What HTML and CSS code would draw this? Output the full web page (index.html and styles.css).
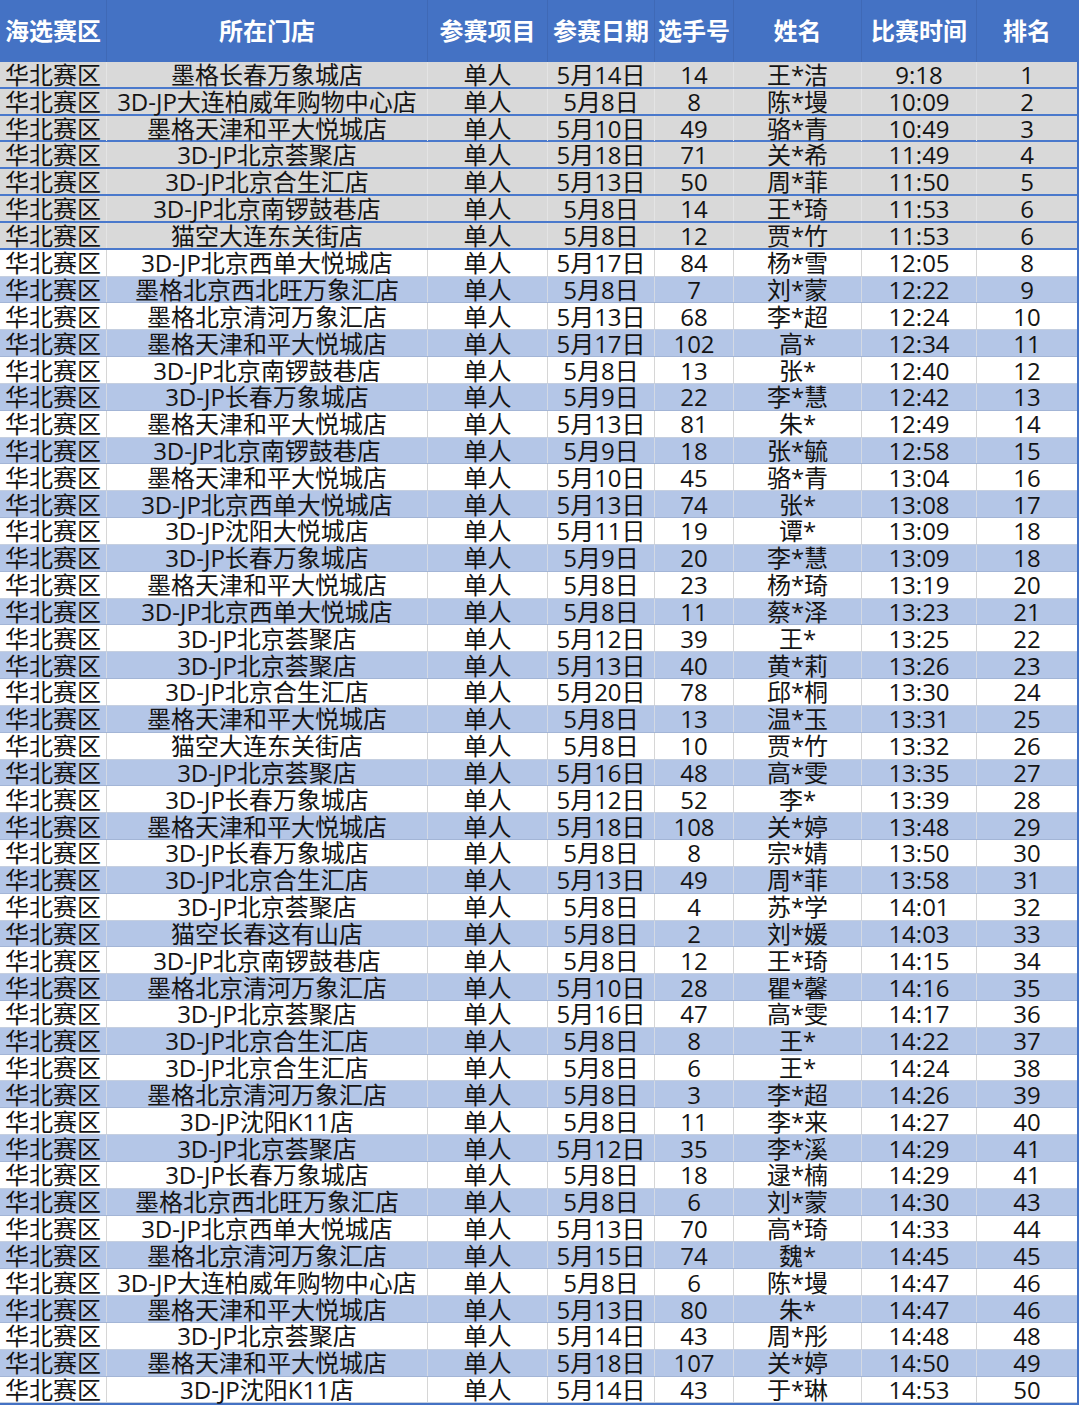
FILE: index.html
```html
<!DOCTYPE html>
<html lang="zh-CN">
<head>
<meta charset="utf-8">
<title>海选赛区排名</title>
<link rel="stylesheet" href="styles.css">
</head>
<body>
<div class="sheet">
  <div class="row head"><span>海选赛区</span><span>所在门店</span><span>参赛项目</span><span>参赛日期</span><span>选手号</span><span>姓名</span><span>比赛时间</span><span>排名</span></div>
  <div class="row grey"><span>华北赛区</span><span>墨格长春万象城店</span><span>单人</span><span>5月14日</span><span>14</span><span>王*洁</span><span>9:18</span><span>1</span></div>
  <div class="row grey"><span>华北赛区</span><span>3D-JP大连柏威年购物中心店</span><span>单人</span><span>5月8日</span><span>8</span><span>陈*墁</span><span>10:09</span><span>2</span></div>
  <div class="row grey"><span>华北赛区</span><span>墨格天津和平大悦城店</span><span>单人</span><span>5月10日</span><span>49</span><span>骆*青</span><span>10:49</span><span>3</span></div>
  <div class="row grey"><span>华北赛区</span><span>3D-JP北京荟聚店</span><span>单人</span><span>5月18日</span><span>71</span><span>关*希</span><span>11:49</span><span>4</span></div>
  <div class="row grey"><span>华北赛区</span><span>3D-JP北京合生汇店</span><span>单人</span><span>5月13日</span><span>50</span><span>周*菲</span><span>11:50</span><span>5</span></div>
  <div class="row grey"><span>华北赛区</span><span>3D-JP北京南锣鼓巷店</span><span>单人</span><span>5月8日</span><span>14</span><span>王*琦</span><span>11:53</span><span>6</span></div>
  <div class="row grey last"><span>华北赛区</span><span>猫空大连东关街店</span><span>单人</span><span>5月8日</span><span>12</span><span>贾*竹</span><span>11:53</span><span>6</span></div>
  <div class="row white"><span>华北赛区</span><span>3D-JP北京西单大悦城店</span><span>单人</span><span>5月17日</span><span>84</span><span>杨*雪</span><span>12:05</span><span>8</span></div>
  <div class="row blue"><span>华北赛区</span><span>墨格北京西北旺万象汇店</span><span>单人</span><span>5月8日</span><span>7</span><span>刘*蒙</span><span>12:22</span><span>9</span></div>
  <div class="row white"><span>华北赛区</span><span>墨格北京清河万象汇店</span><span>单人</span><span>5月13日</span><span>68</span><span>李*超</span><span>12:24</span><span>10</span></div>
  <div class="row blue"><span>华北赛区</span><span>墨格天津和平大悦城店</span><span>单人</span><span>5月17日</span><span>102</span><span>高*</span><span>12:34</span><span>11</span></div>
  <div class="row white"><span>华北赛区</span><span>3D-JP北京南锣鼓巷店</span><span>单人</span><span>5月8日</span><span>13</span><span>张*</span><span>12:40</span><span>12</span></div>
  <div class="row blue"><span>华北赛区</span><span>3D-JP长春万象城店</span><span>单人</span><span>5月9日</span><span>22</span><span>李*慧</span><span>12:42</span><span>13</span></div>
  <div class="row white"><span>华北赛区</span><span>墨格天津和平大悦城店</span><span>单人</span><span>5月13日</span><span>81</span><span>朱*</span><span>12:49</span><span>14</span></div>
  <div class="row blue"><span>华北赛区</span><span>3D-JP北京南锣鼓巷店</span><span>单人</span><span>5月9日</span><span>18</span><span>张*毓</span><span>12:58</span><span>15</span></div>
  <div class="row white"><span>华北赛区</span><span>墨格天津和平大悦城店</span><span>单人</span><span>5月10日</span><span>45</span><span>骆*青</span><span>13:04</span><span>16</span></div>
  <div class="row blue"><span>华北赛区</span><span>3D-JP北京西单大悦城店</span><span>单人</span><span>5月13日</span><span>74</span><span>张*</span><span>13:08</span><span>17</span></div>
  <div class="row white"><span>华北赛区</span><span>3D-JP沈阳大悦城店</span><span>单人</span><span>5月11日</span><span>19</span><span>谭*</span><span>13:09</span><span>18</span></div>
  <div class="row blue"><span>华北赛区</span><span>3D-JP长春万象城店</span><span>单人</span><span>5月9日</span><span>20</span><span>李*慧</span><span>13:09</span><span>18</span></div>
  <div class="row white"><span>华北赛区</span><span>墨格天津和平大悦城店</span><span>单人</span><span>5月8日</span><span>23</span><span>杨*琦</span><span>13:19</span><span>20</span></div>
  <div class="row blue"><span>华北赛区</span><span>3D-JP北京西单大悦城店</span><span>单人</span><span>5月8日</span><span>11</span><span>蔡*泽</span><span>13:23</span><span>21</span></div>
  <div class="row white"><span>华北赛区</span><span>3D-JP北京荟聚店</span><span>单人</span><span>5月12日</span><span>39</span><span>王*</span><span>13:25</span><span>22</span></div>
  <div class="row blue"><span>华北赛区</span><span>3D-JP北京荟聚店</span><span>单人</span><span>5月13日</span><span>40</span><span>黄*莉</span><span>13:26</span><span>23</span></div>
  <div class="row white"><span>华北赛区</span><span>3D-JP北京合生汇店</span><span>单人</span><span>5月20日</span><span>78</span><span>邱*桐</span><span>13:30</span><span>24</span></div>
  <div class="row blue"><span>华北赛区</span><span>墨格天津和平大悦城店</span><span>单人</span><span>5月8日</span><span>13</span><span>温*玉</span><span>13:31</span><span>25</span></div>
  <div class="row white"><span>华北赛区</span><span>猫空大连东关街店</span><span>单人</span><span>5月8日</span><span>10</span><span>贾*竹</span><span>13:32</span><span>26</span></div>
  <div class="row blue"><span>华北赛区</span><span>3D-JP北京荟聚店</span><span>单人</span><span>5月16日</span><span>48</span><span>高*雯</span><span>13:35</span><span>27</span></div>
  <div class="row white"><span>华北赛区</span><span>3D-JP长春万象城店</span><span>单人</span><span>5月12日</span><span>52</span><span>李*</span><span>13:39</span><span>28</span></div>
  <div class="row blue"><span>华北赛区</span><span>墨格天津和平大悦城店</span><span>单人</span><span>5月18日</span><span>108</span><span>关*婷</span><span>13:48</span><span>29</span></div>
  <div class="row white"><span>华北赛区</span><span>3D-JP长春万象城店</span><span>单人</span><span>5月8日</span><span>8</span><span>宗*婧</span><span>13:50</span><span>30</span></div>
  <div class="row blue"><span>华北赛区</span><span>3D-JP北京合生汇店</span><span>单人</span><span>5月13日</span><span>49</span><span>周*菲</span><span>13:58</span><span>31</span></div>
  <div class="row white"><span>华北赛区</span><span>3D-JP北京荟聚店</span><span>单人</span><span>5月8日</span><span>4</span><span>苏*学</span><span>14:01</span><span>32</span></div>
  <div class="row blue"><span>华北赛区</span><span>猫空长春这有山店</span><span>单人</span><span>5月8日</span><span>2</span><span>刘*媛</span><span>14:03</span><span>33</span></div>
  <div class="row white"><span>华北赛区</span><span>3D-JP北京南锣鼓巷店</span><span>单人</span><span>5月8日</span><span>12</span><span>王*琦</span><span>14:15</span><span>34</span></div>
  <div class="row blue"><span>华北赛区</span><span>墨格北京清河万象汇店</span><span>单人</span><span>5月10日</span><span>28</span><span>瞿*馨</span><span>14:16</span><span>35</span></div>
  <div class="row white"><span>华北赛区</span><span>3D-JP北京荟聚店</span><span>单人</span><span>5月16日</span><span>47</span><span>高*雯</span><span>14:17</span><span>36</span></div>
  <div class="row blue"><span>华北赛区</span><span>3D-JP北京合生汇店</span><span>单人</span><span>5月8日</span><span>8</span><span>王*</span><span>14:22</span><span>37</span></div>
  <div class="row white"><span>华北赛区</span><span>3D-JP北京合生汇店</span><span>单人</span><span>5月8日</span><span>6</span><span>王*</span><span>14:24</span><span>38</span></div>
  <div class="row blue"><span>华北赛区</span><span>墨格北京清河万象汇店</span><span>单人</span><span>5月8日</span><span>3</span><span>李*超</span><span>14:26</span><span>39</span></div>
  <div class="row white"><span>华北赛区</span><span>3D-JP沈阳K11店</span><span>单人</span><span>5月8日</span><span>11</span><span>李*来</span><span>14:27</span><span>40</span></div>
  <div class="row blue"><span>华北赛区</span><span>3D-JP北京荟聚店</span><span>单人</span><span>5月12日</span><span>35</span><span>李*溪</span><span>14:29</span><span>41</span></div>
  <div class="row white"><span>华北赛区</span><span>3D-JP长春万象城店</span><span>单人</span><span>5月8日</span><span>18</span><span>逯*楠</span><span>14:29</span><span>41</span></div>
  <div class="row blue"><span>华北赛区</span><span>墨格北京西北旺万象汇店</span><span>单人</span><span>5月8日</span><span>6</span><span>刘*蒙</span><span>14:30</span><span>43</span></div>
  <div class="row white"><span>华北赛区</span><span>3D-JP北京西单大悦城店</span><span>单人</span><span>5月13日</span><span>70</span><span>高*琦</span><span>14:33</span><span>44</span></div>
  <div class="row blue"><span>华北赛区</span><span>墨格北京清河万象汇店</span><span>单人</span><span>5月15日</span><span>74</span><span>魏*</span><span>14:45</span><span>45</span></div>
  <div class="row white"><span>华北赛区</span><span>3D-JP大连柏威年购物中心店</span><span>单人</span><span>5月8日</span><span>6</span><span>陈*墁</span><span>14:47</span><span>46</span></div>
  <div class="row blue"><span>华北赛区</span><span>墨格天津和平大悦城店</span><span>单人</span><span>5月13日</span><span>80</span><span>朱*</span><span>14:47</span><span>46</span></div>
  <div class="row white"><span>华北赛区</span><span>3D-JP北京荟聚店</span><span>单人</span><span>5月14日</span><span>43</span><span>周*彤</span><span>14:48</span><span>48</span></div>
  <div class="row blue"><span>华北赛区</span><span>墨格天津和平大悦城店</span><span>单人</span><span>5月18日</span><span>107</span><span>关*婷</span><span>14:50</span><span>49</span></div>
  <div class="row white"><span>华北赛区</span><span>3D-JP沈阳K11店</span><span>单人</span><span>5月14日</span><span>43</span><span>于*琳</span><span>14:53</span><span>50</span></div>
</div>
</body>
</html>
```
FILE: styles.css
```css
html, body {
  margin: 0;
  padding: 0;
  background: #ffffff;
}

body {
  font-family: "Open Sans", "Noto Sans CJK SC", sans-serif;
  color: #141414;
}

.sheet {
  width: 1079px;
  box-sizing: border-box;
  border-right: 2px solid #4472c4;
  border-bottom: 2px solid #4472c4;
}

.row {
  display: grid;
  grid-template-columns: 107px 321px 120px 107px 79px 128px 115px 1fr;
  height: 26.84px;
  box-sizing: border-box;
}

.row span {
  display: flex;
  align-items: center;
  justify-content: center;
  white-space: nowrap;
  font-size: 24px;
  line-height: 1;
  padding-top: 1px;
  border-right: 1px solid #d6d6d6;
}

.row span:last-child {
  border-right: none;
}

.head {
  height: 62px;
  background: #4472c4;
  color: #ffffff;
}

.head span {
  font-weight: 700;
  font-size: 24px;
  border-right: 1px solid #3f69b6;
  padding-top: 0;
}

.grey {
  background: #d9d9d9;
  border-bottom: 2px solid #4a79cc;
}

.grey span {
  border-right-color: #e4e4e4;
}

.white {
  background: #ffffff;
  border-bottom: 1px solid #c5cfe0;
}

.blue {
  background: #b4c6e7;
  border-bottom: 1px solid #a3b5d6;
}

.blue span {
  border-right-color: #d3d9e4;
}
```
